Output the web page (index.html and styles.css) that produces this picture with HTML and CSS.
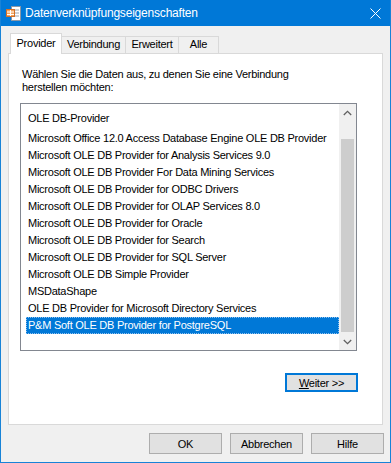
FILE: index.html
```html
<!DOCTYPE html>
<html lang="de">
<head>
  <meta charset="UTF-8">
  <title>Datenverknüpfungseigenschaften</title>
  <link rel="stylesheet" href="styles.css">
</head>
<body>

<div class="window">
  <div class="titlebar">
    <svg class="app-icon" width="15" height="15" viewBox="0 0 15 15">
      <rect x="5.5" y="0.5" width="9" height="14" fill="#fff" stroke="#8a98a8"/>
      <line x1="8" y1="4" x2="13" y2="4" stroke="#9aa6b2"/>
      <line x1="8" y1="7" x2="13" y2="7" stroke="#9aa6b2"/>
      <line x1="8" y1="10" x2="13" y2="10" stroke="#9aa6b2"/>
      <rect x="0.5" y="3.5" width="8" height="7" fill="#f3a35a" stroke="#d0702a"/>
      <line x1="1" y1="6" x2="8" y2="6" stroke="#fff"/>
      <line x1="1" y1="8.5" x2="8" y2="8.5" stroke="#fff"/>
      <line x1="4.5" y1="4" x2="4.5" y2="10" stroke="#fff"/>
    </svg>
    <span class="title">Datenverknüpfungseigenschaften</span>
    <svg class="close" width="11" height="11" viewBox="0 0 11 11">
      <path d="M0.5 0.5 L10.5 10.5 M10.5 0.5 L0.5 10.5" stroke="#fff" stroke-width="1"/>
    </svg>
  </div>

  <div class="client">
    <div class="tabs">
      <div class="tab active">Provider</div>
      <div class="tab tab-verbindung">Verbindung</div>
      <div class="tab tab-erweitert">Erweitert</div>
      <div class="tab tab-alle">Alle</div>
    </div>

    <div class="panel">
      <p class="intro">Wählen Sie die Daten aus, zu denen Sie eine Verbindung<br>herstellen möchten:</p>

      <div class="listbox">
        <div class="list">
          <div class="list-head">OLE DB-Provider</div>
          <div class="item">Microsoft Office 12.0 Access Database Engine OLE DB Provider</div>
          <div class="item">Microsoft OLE DB Provider for Analysis Services 9.0</div>
          <div class="item">Microsoft OLE DB Provider For Data Mining Services</div>
          <div class="item">Microsoft OLE DB Provider for ODBC Drivers</div>
          <div class="item">Microsoft OLE DB Provider for OLAP Services 8.0</div>
          <div class="item">Microsoft OLE DB Provider for Oracle</div>
          <div class="item">Microsoft OLE DB Provider for Search</div>
          <div class="item">Microsoft OLE DB Provider for SQL Server</div>
          <div class="item">Microsoft OLE DB Simple Provider</div>
          <div class="item">MSDataShape</div>
          <div class="item">OLE DB Provider for Microsoft Directory Services</div>
          <div class="item selected">P&amp;M Soft OLE DB Provider for PostgreSQL</div>
        </div>
        <div class="scrollbar">
          <div class="arrow">
            <svg width="9" height="6" viewBox="0 0 9 6"><path d="M0.8 5 L4.5 1.3 L8.2 5" fill="none" stroke="#606060" stroke-width="1.3"/></svg>
          </div>
          <div class="track"><div class="thumb"></div></div>
          <div class="arrow">
            <svg width="9" height="6" viewBox="0 0 9 6"><path d="M0.8 1 L4.5 4.7 L8.2 1" fill="none" stroke="#606060" stroke-width="1.3"/></svg>
          </div>
        </div>
      </div>

      <div class="panel-actions">
        <button class="btn default"><u>W</u>eiter &gt;&gt;</button>
      </div>
    </div>

    <div class="actions">
      <button class="btn">OK</button>
      <button class="btn">Abbrechen</button>
      <button class="btn">Hilfe</button>
    </div>
  </div>
</div>

</body>
</html>
```

FILE: styles.css
```css
body {
  margin: 0;
  font-family: "Liberation Sans", Arial, sans-serif;
  font-size: 11px;
  letter-spacing: -0.25px;
  color: #000;
}

.window {
  width: 391px;
  height: 463px;
  box-sizing: border-box;
  border: 1px solid #1883d7;
  border-top: none;
  background: #f0f0f0;
  display: flex;
  flex-direction: column;
}

.titlebar {
  height: 26px;
  background: #0078d7;
  display: flex;
  align-items: center;
  padding-left: 5px;
  color: #fff;
}

.app-icon {
  margin-right: 4px;
  margin-top: 1px;
}

.title {
  font-size: 12px;
  letter-spacing: -0.2px;
}

.close {
  margin-left: auto;
  margin-right: 9px;
}

.client {
  flex: 1;
  display: flex;
  flex-direction: column;
  padding: 7px 7px 8px 7px;
}

.tabs {
  height: 20px;
  display: flex;
  align-items: flex-end;
  padding-left: 2px;
}

.tab {
  box-sizing: border-box;
  height: 17px;
  line-height: 15px;
  border: 1px solid #d9d9d9;
  border-bottom: none;
  background: #f0f0f0;
  text-align: center;
  margin-left: -1px;
}

.tab.active {
  position: relative;
  z-index: 1;
  width: 52px;
  height: 21px;
  line-height: 19px;
  margin-bottom: -1px;
  margin-left: 0;
  background: #fff;
}

.tab-verbindung {
  width: 65px;
}

.tab-erweitert {
  width: 54px;
}

.tab-alle {
  width: 41px;
}

.panel {
  flex: 1;
  background: #fff;
  border: 1px solid #d9d9d9;
  padding: 0 25px 0 11px;
  display: flex;
  flex-direction: column;
}

.intro {
  margin: 14px 0 0 2px;
  line-height: 13px;
}

.listbox {
  margin-top: 9px;
  height: 248px;
  box-sizing: border-box;
  border: 1px solid #828790;
  display: flex;
}

.list {
  flex: 1;
  padding: 6px 0 0 5px;
  overflow: hidden;
}

.list-head,
.item {
  height: 17px;
  line-height: 17px;
  padding-left: 2px;
  white-space: nowrap;
}

.list-head {
  margin-bottom: 3px;
}

.item.selected {
  background: #0078d7;
  color: #fff;
  box-sizing: border-box;
  border: 1px dotted #8fc1ee;
  line-height: 15px;
  padding-left: 1px;
}

.scrollbar {
  width: 17px;
  background: #f0f0f0;
  display: flex;
  flex-direction: column;
}

.arrow {
  height: 17px;
  display: flex;
  align-items: center;
  justify-content: center;
}

.track {
  flex: 1;
  padding: 18px 2px 1px;
  display: flex;
}

.thumb {
  flex: 1;
  background: #cdcdcd;
}

.panel-actions {
  display: flex;
  justify-content: flex-end;
  margin-top: 22px;
}

.btn {
  box-sizing: border-box;
  width: 73px;
  height: 21px;
  padding: 0;
  font-family: "Liberation Sans", Arial, sans-serif;
  font-size: 11px;
  letter-spacing: -0.25px;
  color: #000;
  background: #e1e1e1;
  border: 1px solid #adadad;
}

.btn.default {
  height: 19px;
  border: 2px solid #0078d7;
  margin-right: -1px;
}

.actions {
  margin-top: 8px;
  display: flex;
  justify-content: flex-end;
  gap: 8px;
  margin-right: -1px;
}
```
